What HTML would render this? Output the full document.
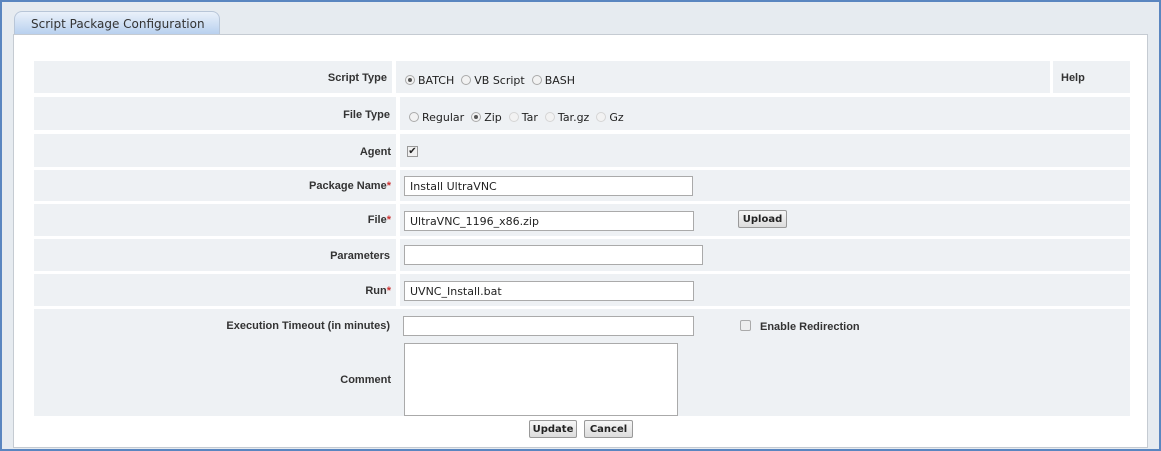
<!DOCTYPE html><html><head><style>
*{margin:0;padding:0;box-sizing:border-box}
body{width:1161px;height:451px;background:#e6ebf0;position:relative;overflow:hidden;font-family:"DejaVu Sans","Liberation Sans",sans-serif;font-size:10px;color:#222}
.frame{position:absolute;left:0;top:0;width:1161px;height:451px;border:2px solid #5a86c0}
.a{position:absolute}
.tab{left:14px;top:11px;width:206px;height:24px;border:1px solid #b8c6d8;border-bottom:none;border-radius:8px 8px 0 0;background:linear-gradient(#eaf1fa,#b6cfee);font-size:12px;color:#333;padding:5px 0 0 16px}
.panel{left:13px;top:34px;width:1135px;height:414px;background:#fff;border:1px solid #c5cbd2}
.row{background:#eef1f4}
.lab{font-family:"Liberation Sans",sans-serif;font-size:11px;font-weight:bold;text-align:right;color:#333}
.inp{background:#fff;border:1px solid #aaa;height:20px;font-size:11px;padding:3px 5px;color:#222}
.btn{border:1px solid #999;border-radius:2px;background:linear-gradient(#f6f6f6,#dcdcdc);font-weight:bold;font-size:10px;text-align:center;padding-top:3px;height:18px}
.r{display:inline-block;width:10px;height:10px;border-radius:50%;border:1px solid #aaa;background:#f2f2f2;vertical-align:-1px;margin-right:3px;position:relative}
.r.on::after{content:"";position:absolute;left:2px;top:2px;width:4px;height:4px;border-radius:50%;background:#555}
.r.dis{border-color:#d5d5d5}
.v{font-size:11px}
</style></head><body>
<div class="frame"></div>
<div class="a tab">Script Package Configuration</div>
<div class="a panel"></div>
<div class="a row" style="left:34px;top:61px;width:358px;height:32px"></div>
<div class="a row" style="left:396px;top:61px;width:654px;height:32px"></div>
<div class="a row" style="left:1053px;top:61px;width:77px;height:32px"></div>
<div class="a row" style="left:34px;top:97px;width:362px;height:33px"></div>
<div class="a row" style="left:400px;top:97px;width:730px;height:33px"></div>
<div class="a row" style="left:34px;top:134px;width:362px;height:33px"></div>
<div class="a row" style="left:400px;top:134px;width:730px;height:33px"></div>
<div class="a row" style="left:34px;top:170px;width:362px;height:31px"></div>
<div class="a row" style="left:400px;top:170px;width:730px;height:31px"></div>
<div class="a row" style="left:34px;top:204px;width:362px;height:32px"></div>
<div class="a row" style="left:400px;top:204px;width:730px;height:32px"></div>
<div class="a row" style="left:34px;top:239px;width:362px;height:32px"></div>
<div class="a row" style="left:400px;top:239px;width:730px;height:32px"></div>
<div class="a row" style="left:34px;top:274px;width:362px;height:32px"></div>
<div class="a row" style="left:400px;top:274px;width:730px;height:32px"></div>
<div class="a row" style="left:34px;top:309px;width:1096px;height:107px"></div>
<div class="a lab" style="left:34px;top:72px;width:353px">Script Type</div>
<div class="a lab" style="left:34px;top:109px;width:356px">File Type</div>
<div class="a lab" style="left:34px;top:146px;width:357px">Agent</div>
<div class="a lab" style="left:34px;top:180px;width:357px">Package Name<span style="color:#c33">*</span></div>
<div class="a lab" style="left:34px;top:214px;width:357px">File<span style="color:#c33">*</span></div>
<div class="a lab" style="left:34px;top:250px;width:356px">Parameters</div>
<div class="a lab" style="left:34px;top:285px;width:357px">Run<span style="color:#c33">*</span></div>
<div class="a lab" style="left:34px;top:320px;width:356px">Execution Timeout (in minutes)</div>
<div class="a lab" style="left:34px;top:374px;width:357px">Comment</div>
<div class="a lab" style="left:1061px;top:72px;text-align:left">Help</div>
<div class="a v" style="left:405px;top:74px"><span class="r on"></span>BATCH &nbsp;<span class="r"></span>VB Script &nbsp;<span class="r"></span>BASH</div>
<div class="a v" style="left:409px;top:111px"><span class="r"></span>Regular &nbsp;<span class="r on"></span>Zip &nbsp;<span class="r dis"></span>Tar &nbsp;<span class="r dis"></span>Tar.gz &nbsp;<span class="r dis"></span>Gz</div>
<div class="a" style="left:407px;top:146px;width:11px;height:11px;border:1px solid #999;background:#f0f0f0;font-size:10px;line-height:9px;text-align:center">✔</div>
<div class="a inp" style="left:404px;top:176px;width:289px">Install UltraVNC</div>
<div class="a inp" style="left:404px;top:211px;width:290px">UltraVNC_1196_x86.zip</div>
<div class="a btn" style="left:738px;top:210px;width:49px">Upload</div>
<div class="a inp" style="left:404px;top:245px;width:299px"></div>
<div class="a inp" style="left:404px;top:281px;width:290px">UVNC_Install.bat</div>
<div class="a inp" style="left:403px;top:316px;width:291px"></div>
<div class="a" style="left:740px;top:320px;width:11px;height:11px;border:1px solid #aaa;border-radius:2px;background:#eee"></div>
<div class="a lab" style="left:760px;top:321px;text-align:left">Enable Redirection</div>
<div class="a inp" style="left:404px;top:343px;width:274px;height:73px"></div>
<div class="a btn" style="left:529px;top:420px;width:48px">Update</div>
<div class="a btn" style="left:584px;top:420px;width:49px">Cancel</div>
</body></html>
